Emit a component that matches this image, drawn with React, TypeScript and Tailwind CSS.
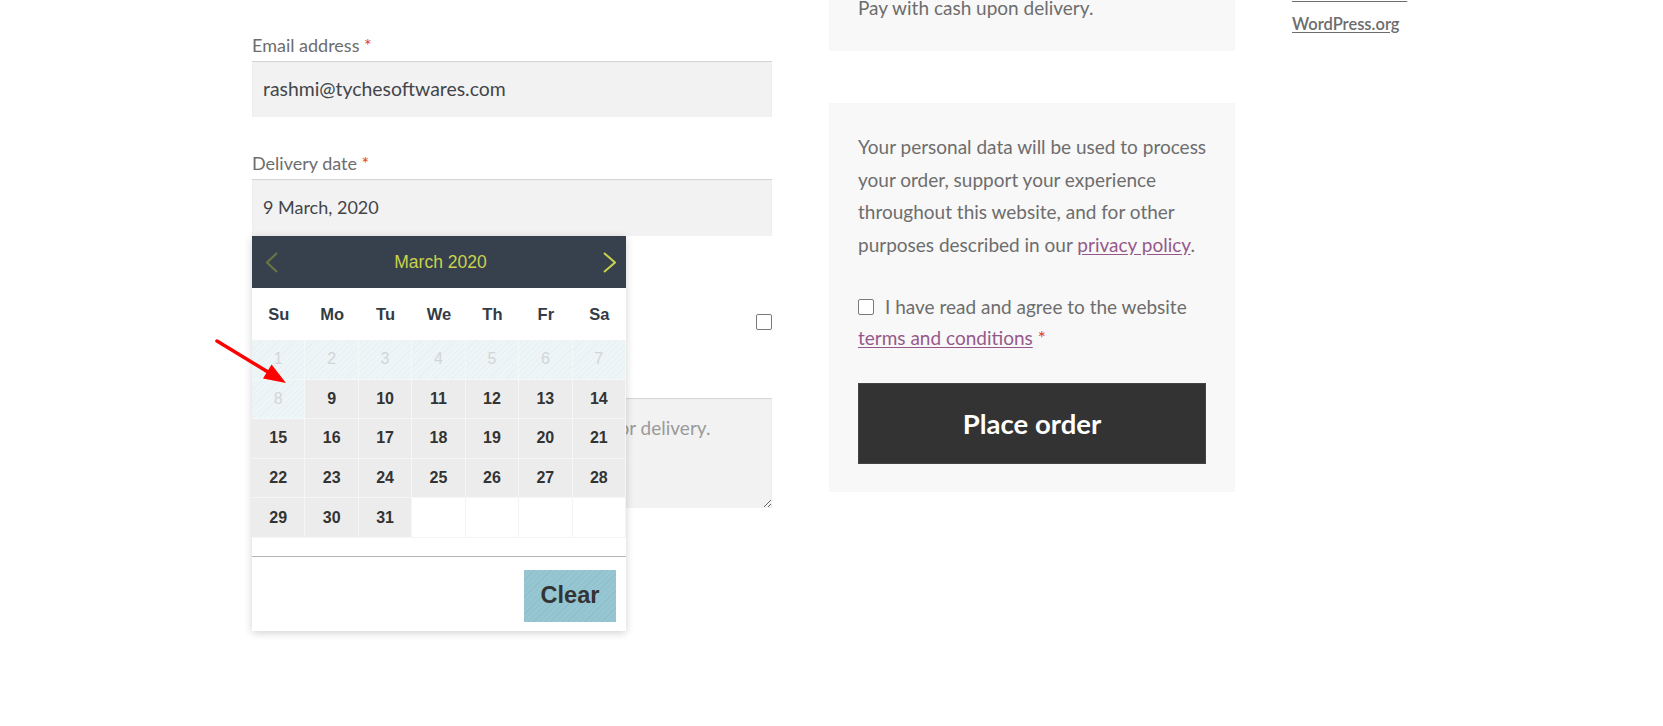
import React from 'react';

const weeks: (number | null)[][] = [
  [1, 2, 3, 4, 5, 6, 7],
  [8, 9, 10, 11, 12, 13, 14],
  [15, 16, 17, 18, 19, 20, 21],
  [22, 23, 24, 25, 26, 27, 28],
  [29, 30, 31, null, null, null, null],
];

const weekdays = ['Su', 'Mo', 'Tu', 'We', 'Th', 'Fr', 'Sa'];

function Required() {
  return <abbr className="text-[#e2401c] no-underline">*</abbr>;
}

function DatePicker() {
  return (
    <div className="absolute left-0 top-full z-10 w-[374px] bg-white font-[family-name:'Liberation_Sans',Arial,sans-serif] shadow-[0_2px_8px_rgba(0,0,0,0.18)]">
      {/* month header */}
      <div className="flex h-[52px] items-center justify-between bg-[#37414e] pl-[14px] pr-[10px]">
        <svg width="12" height="21" viewBox="0 0 12 21" fill="none">
          <polyline points="11,1 1,10.5 11,20" stroke="#6b7742" strokeWidth="2" />
        </svg>
        <span className="text-[17.5px] text-[#c9d24c]">March 2020</span>
        <svg width="13" height="21" viewBox="0 0 13 21" fill="none">
          <polyline points="1,1 12,10.5 1,20" stroke="#c9d24c" strokeWidth="2" />
        </svg>
      </div>

      {/* weekdays */}
      <div className="grid h-[52px] grid-cols-7 items-center bg-white text-center text-[16.5px] font-bold text-[#333b45]">
        {weekdays.map((d) => (
          <span key={d}>{d}</span>
        ))}
      </div>

      {/* days */}
      <div className="grid grid-cols-7">
        {weeks.flat().map((d, i) => {
          if (d === null) {
            return <div key={i} className="h-[39.6px] border-b border-r border-[#f4f4f4] bg-white" />;
          }
          const disabled = d < 9;
          return (
            <div
              key={i}
              className={
                disabled
                  ? 'flex h-[39.6px] items-center justify-center border-b border-r border-[#f3f8f9] bg-[repeating-linear-gradient(135deg,#eef5f7_0px,#eef5f7_3px,#e7f0f3_3px,#e7f0f3_4px)] text-[16px] text-[#d2d6d8]'
                  : 'flex h-[39.6px] items-center justify-center border-b border-r border-[#f6f6f6] bg-[#ececec] text-[16px] font-bold text-[#333]'
              }
            >
              {d}
            </div>
          );
        })}
      </div>

      <div className="h-[18px] bg-white" />
      <div className="flex justify-end border-t border-[#b4b4b4] pb-[9px] pr-[10px] pt-[13px]">
        <button className="h-[52px] w-[92px] bg-[#96c6d2] bg-[repeating-linear-gradient(135deg,#96c6d2_0px,#96c6d2_3px,#8ebfcb_3px,#8ebfcb_4px)] text-[23.5px] font-bold text-[#333]">
          Clear
        </button>
      </div>
    </div>
  );
}

function LeftColumn() {
  return (
    <div className="mt-[29px] w-[520px]">
      <div className="mb-[30px]">
        <label className="block leading-[32px]">
          Email address <Required />
        </label>
        <div className="flex h-[56px] items-center bg-[#f2f2f2] pl-[11px] text-[19.4px] text-[#43454b] shadow-[inset_0_1px_1px_rgba(0,0,0,0.13)]">
          rashmi@tychesoftwares.com
        </div>
      </div>

      <div className="relative">
        <label className="block leading-[32px]">
          Delivery date <Required />
        </label>
        <div className="flex h-[57px] items-center bg-[#f2f2f2] pl-[11px] text-[18px] text-[#43454b] shadow-[inset_0_1px_1px_rgba(0,0,0,0.13)]">
          9 March, 2020
        </div>
        <DatePicker />
      </div>

      {/* row under the picker: only its checkbox shows past the popup */}
      <div className="mt-[70px] flex h-[32px] items-center justify-end">
        <span className="h-4 w-4 rounded-[2px] border border-[#7a7a7a] bg-white" />
      </div>

      <textarea
        readOnly
        placeholder="Notes about your order, e.g. special notes for delivery."
        className="mt-[60px] block h-[110px] w-full bg-[#f2f2f2] px-[11px] pt-[14px] text-[19px] leading-[32px] text-[#43454b] shadow-[inset_0_1px_1px_rgba(0,0,0,0.13)] outline-none placeholder:text-[#9a9a9a]"
      />
    </div>
  );
}

function RightColumn() {
  return (
    <div className="ml-[57px] -mt-[36px] w-[406px] text-[19px]">
      <div className="bg-[#f8f8f8] px-[29px] pb-[26.5px] pt-[28px] leading-[32.5px]">
        Pay with cash upon delivery.
      </div>

      <div className="mt-[52px] bg-[#f8f8f8] p-[29px] pt-[28px] pb-[28px]">
        <p className="whitespace-nowrap leading-[32.5px]">
          Your personal data will be used to process
          <br />
          your order, support your experience
          <br />
          throughout this website, and for other
          <br />
          purposes described in our{' '}
          <a className="text-[#96588a] underline underline-offset-2">privacy policy</a>.
        </p>

        <p className="mt-[30px] whitespace-nowrap leading-[31px]">
          <span className="mr-[11px] inline-block h-4 w-4 translate-y-[1px] rounded-[2px] border border-[#7a7a7a] bg-white align-baseline" />
          I have read and agree to the website
          <br />
          <a className="text-[#96588a] underline underline-offset-2">terms and conditions</a>{' '}
          <span className="text-[#e2401c]">*</span>
        </p>

        <button className="mt-[30px] flex h-[81px] w-full items-center justify-center border border-[#444] bg-[#333] text-[27.5px] font-bold text-white">
          Place order
        </button>
      </div>
    </div>
  );
}

function Sidebar() {
  return (
    <ul className="ml-[57px] -mt-[22.5px] text-[16.5px] font-semibold leading-[31px] text-[#6d6d6d]">
      <li>
        <a className="underline underline-offset-2">Comments feed</a>
      </li>
      <li>
        <a className="underline underline-offset-2">WordPress.org</a>
      </li>
    </ul>
  );
}

function RedArrow() {
  return (
    <svg className="absolute left-[200px] top-[320px] z-20" width="100" height="80" viewBox="0 0 100 80">
      <line x1="17" y1="21" x2="68" y2="52" stroke="#ff0000" strokeWidth="3.5" strokeLinecap="round" />
      <polygon points="86,63 63,58.6 71.6,44.6" fill="#ff0000" />
    </svg>
  );
}

export default function App() {
  return (
    <div className="relative min-h-screen overflow-hidden bg-white font-[family-name:Lato,sans-serif] text-[18px] text-[#6d6d6d]">
      <div className="flex items-start pl-[252px]">
        <LeftColumn />
        <RightColumn />
        <Sidebar />
      </div>
      <RedArrow />
    </div>
  );
}
